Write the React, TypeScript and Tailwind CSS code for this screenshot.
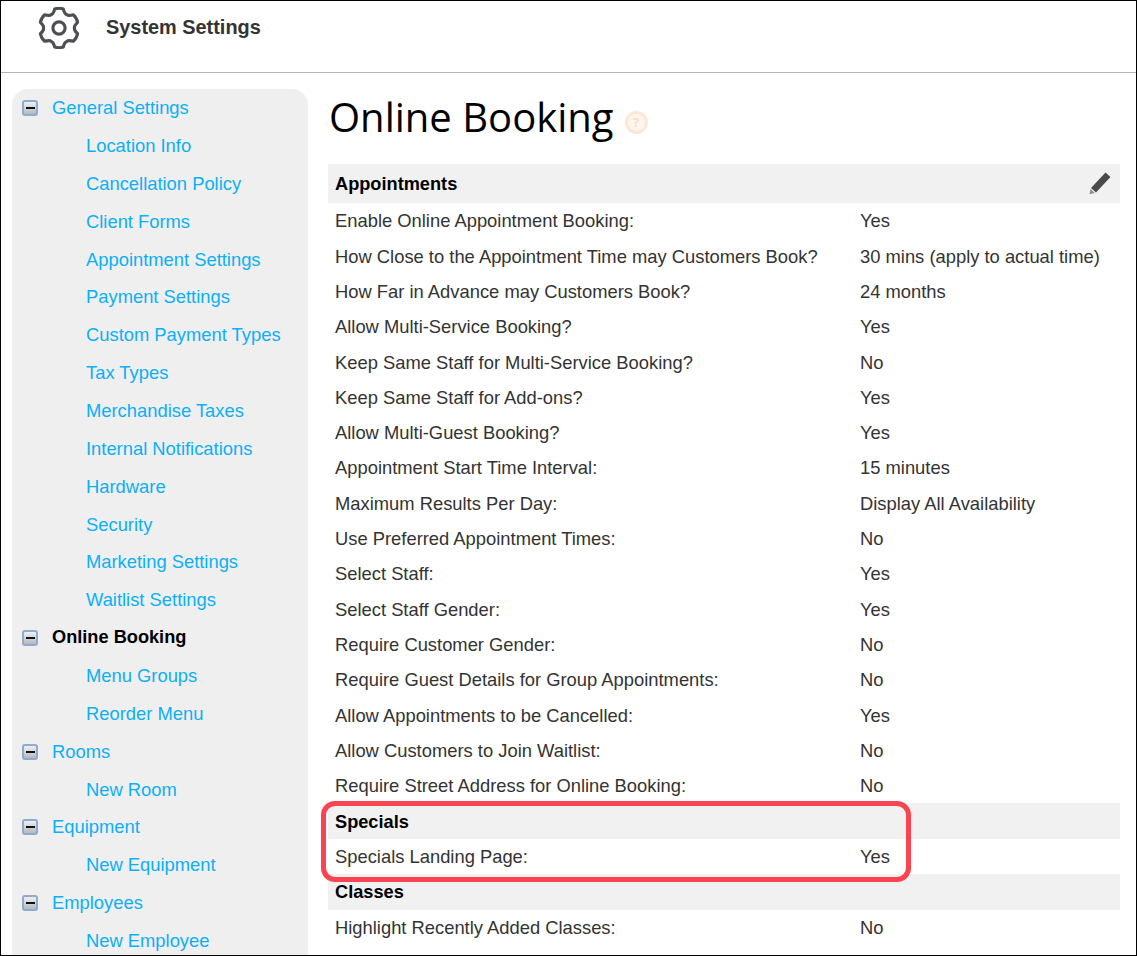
import React from 'react';

const sidebar: { label: string; top?: boolean; active?: boolean }[] = [
  { label: 'General Settings', top: true },
  { label: 'Location Info' },
  { label: 'Cancellation Policy' },
  { label: 'Client Forms' },
  { label: 'Appointment Settings' },
  { label: 'Payment Settings' },
  { label: 'Custom Payment Types' },
  { label: 'Tax Types' },
  { label: 'Merchandise Taxes' },
  { label: 'Internal Notifications' },
  { label: 'Hardware' },
  { label: 'Security' },
  { label: 'Marketing Settings' },
  { label: 'Waitlist Settings' },
  { label: 'Online Booking', top: true, active: true },
  { label: 'Menu Groups' },
  { label: 'Reorder Menu' },
  { label: 'Rooms', top: true },
  { label: 'New Room' },
  { label: 'Equipment', top: true },
  { label: 'New Equipment' },
  { label: 'Employees', top: true },
  { label: 'New Employee' },
];

const appointments = [
  ['Enable Online Appointment Booking:', 'Yes'],
  ['How Close to the Appointment Time may Customers Book?', '30 mins (apply to actual time)'],
  ['How Far in Advance may Customers Book?', '24 months'],
  ['Allow Multi-Service Booking?', 'Yes'],
  ['Keep Same Staff for Multi-Service Booking?', 'No'],
  ['Keep Same Staff for Add-ons?', 'Yes'],
  ['Allow Multi-Guest Booking?', 'Yes'],
  ['Appointment Start Time Interval:', '15 minutes'],
  ['Maximum Results Per Day:', 'Display All Availability'],
  ['Use Preferred Appointment Times:', 'No'],
  ['Select Staff:', 'Yes'],
  ['Select Staff Gender:', 'Yes'],
  ['Require Customer Gender:', 'No'],
  ['Require Guest Details for Group Appointments:', 'No'],
  ['Allow Appointments to be Cancelled:', 'Yes'],
  ['Allow Customers to Join Waitlist:', 'No'],
  ['Require Street Address for Online Booking:', 'No'],
];

function MinusBox() {
  return (
    <span className="flex h-[16px] w-[16px] shrink-0 items-center justify-center rounded-[3px] border-2 border-[#8fabcb] bg-gradient-to-b from-[#eef1f4] to-[#b5b9be]">
      <span className="h-[2px] w-[9px] bg-[#111]" />
    </span>
  );
}

// six rounded teeth around the centre of a 40 unit box
function gearPath() {
  const pt = (r: number, deg: number) => {
    const a = ((deg - 90) * Math.PI) / 180;
    return `${(20 + r * Math.cos(a)).toFixed(2)} ${(20 + r * Math.sin(a)).toFixed(2)}`;
  };
  let d = `M${pt(18.5, -13)}`;
  for (let k = 0; k < 6; k++) {
    const a = k * 60;
    d += ` Q${pt(19.5, a)} ${pt(18.5, a + 13)}`;
    d += ` C${pt(15, a + 20)} ${pt(14.5, a + 25)} ${pt(14.8, a + 30)}`;
    d += ` C${pt(14.5, a + 35)} ${pt(15, a + 40)} ${pt(18.5, a + 47)}`;
  }
  return d + 'Z';
}

function Gear() {
  return (
    <svg width="42" height="42" viewBox="0 0 40 40" fill="none" stroke="#4d4f52" strokeWidth="3" strokeLinejoin="round">
      <path d={gearPath()} />
      <circle cx="20" cy="20" r="5.8" />
    </svg>
  );
}

function Row({ label, value }: { label: string; value: string }) {
  return (
    <div className="flex h-[35.3px] items-center pl-[7px] pt-[1px] text-[#333]">
      <span className="w-[525px] shrink-0">{label}</span>
      <span>{value}</span>
    </div>
  );
}

function Section({ title, h, children }: { title: string; h: string; children?: React.ReactNode }) {
  return (
    <div className={`relative flex items-center justify-between bg-[#f1f1f1] pl-[7px] pr-[8px] text-[18.2px] font-bold text-black ${h}`}>
      <span>{title}</span>
      {children}
    </div>
  );
}

export default function App() {
  return (
    <div className="relative h-[956px] w-[1137px] overflow-hidden border border-black bg-white font-['Liberation_Sans',Arial,sans-serif] text-[18.38px]">
      <header className="flex h-[72px] items-start border-b border-[#b5b5b5] pl-[37px] pt-[6px]">
        <Gear />
        <span className="ml-[26px] mt-[8px] text-[19.9px] font-bold leading-[24px] text-[#333]">System Settings</span>
      </header>

      <div className="flex pl-[11px] pt-[16px]">
        <nav className="h-[900px] w-[296px] shrink-0 rounded-t-[16px] bg-[#efefef] pl-[10px]">
          {sidebar.map((item) => (
            <div key={item.label} className="flex h-[37.87px] items-center">
              {item.top ? (
                <>
                  <MinusBox />
                  <span className={`ml-[14px] ${item.active ? 'text-[18.2px] font-bold text-black' : 'text-[#0cb0f5]'}`}>{item.label}</span>
                </>
              ) : (
                <span className="ml-[64px] text-[#0cb0f5]">{item.label}</span>
              )}
            </div>
          ))}
        </nav>

        <main className="ml-[20px] w-[792px] shrink-0">
          <h1 className="flex h-[75px] items-center pb-[20px] pl-[1px] font-['Open_Sans',sans-serif] text-[40px] leading-none text-black">
            Online Booking
            <span className="ml-[11px] mt-[12px] flex h-[23px] w-[23px] items-center justify-center rounded-full border-[3px] border-[#fde8d8] bg-[#fff6ee] text-[13px] font-bold text-[#fbdcc2]">?</span>
          </h1>
          <Section title="Appointments" h="h-[39px] pt-[2px]">
            <svg width="24" height="24" viewBox="0 0 24 24" fill="#4a4a4a" className="absolute right-[8px] top-[7px]">
              <path d="M17.5 1.5l5 4.5L8 21.5l-5-4.500z" />
              <path d="M2.5 18l4.3 4-5.300 1.300z" fill="#8f8f8f" />
            </svg>
          </Section>
          {appointments.map(([label, value]) => (
            <Row key={label} label={label} value={value} />
          ))}
          <Section title="Specials" h="h-[36px] pt-[3px]" />
          <Row label="Specials Landing Page:" value="Yes" />
          <Section title="Classes" h="h-[35.3px] pt-[2px]" />
          <Row label="Highlight Recently Added Classes:" value="No" />
        </main>
      </div>

      <div className="absolute left-[320px] top-[800px] h-[81px] w-[590px] rounded-[14px] border-[5px] border-[#fb4450]" />
    </div>
  );
}
